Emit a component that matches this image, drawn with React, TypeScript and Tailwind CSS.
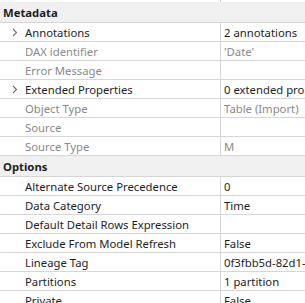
import React from "react";

type Row = { label: string; value?: string; expand?: boolean; dim?: boolean };

const metadata: Row[] = [
  { label: "Annotations", value: "2 annotations", expand: true },
  { label: "DAX identifier", value: "'Date'", dim: true },
  { label: "Error Message", value: "", dim: true },
  { label: "Extended Properties", value: "0 extended properties", expand: true },
  { label: "Object Type", value: "Table (Import)", dim: true },
  { label: "Source", value: "", dim: true },
  { label: "Source Type", value: "M", dim: true },
];

const options: Row[] = [
  { label: "Alternate Source Precedence", value: "0" },
  { label: "Data Category", value: "Time" },
  { label: "Default Detail Rows Expression", value: "" },
  { label: "Exclude From Model Refresh", value: "False" },
  { label: "Lineage Tag", value: "0f3fbb5d-82d1-4c1e-9b1a-1f2e3d4c5b6a" },
  { label: "Partitions", value: "1 partition" },
  { label: "Private", value: "False" },
];

function Chevron() {
  return (
    <svg width="6" height="9" viewBox="0 0 6 9" className="absolute left-[12px] top-[5px]">
      <path d="M1 1 L4.5 4.5 L1 8" fill="none" stroke="#707070" strokeWidth="1.1" />
    </svg>
  );
}

function PropRow({ r }: { r: Row }) {
  const color = r.dim ? "text-[#8a8a8a]" : "text-[#1e1e1e]";
  return (
    <div className="flex h-[19px] border-b border-[#d6d6d6]">
      <div className={`relative w-[221px] shrink-0 border-r border-[#d6d6d6] pl-[25px] leading-[19px] whitespace-nowrap overflow-hidden ${color}`}>
        {r.expand && <Chevron />}
        {r.label}
      </div>
      <div className={`flex-1 pl-[3px] leading-[19px] whitespace-nowrap overflow-hidden ${color}`}>{r.value}</div>
    </div>
  );
}

function Header({ title }: { title: string }) {
  return (
    <div className="h-[21px] bg-[#f0f0f0] border-b border-[#d6d6d6] pl-[3px] leading-[21px] font-bold text-[#1e1e1e]">
      {title}
    </div>
  );
}

export default function App() {
  return (
    <div
      className="w-[305px] h-[303px] overflow-hidden bg-white text-[11.3px]"
      style={{ fontFamily: '"Noto Sans", sans-serif' }}
    >
      <div className="flex h-[2px]">
        <div className="w-[221px] border-r border-[#d6d6d6]" />
      </div>
      <Header title="Metadata" />
      {metadata.map((r) => (
        <PropRow key={r.label} r={r} />
      ))}
      <Header title="Options" />
      {options.map((r) => (
        <PropRow key={r.label} r={r} />
      ))}
    </div>
  );
}
